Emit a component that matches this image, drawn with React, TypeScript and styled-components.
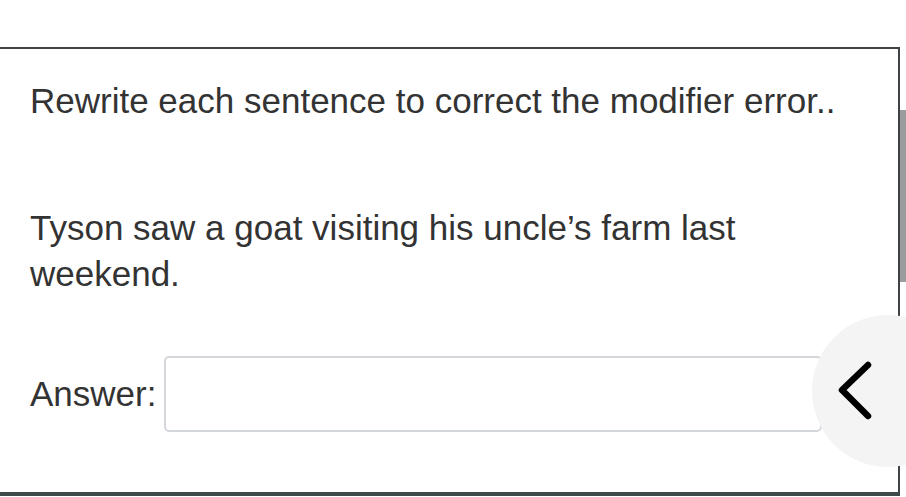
import React from 'react';
import styled, {createGlobalStyle} from "styled-components";

const GlobalStyle = createGlobalStyle`
  html, body {
    margin: 0;
    padding: 0;
    background: #fff;
    overflow: hidden;
  }
  body {
    font-family: "Liberation Sans", Arial, sans-serif;
    color: #333;
  }
`

const App: React.FC = () => {
    return (
        <>
            <GlobalStyle/>
            <StyledPage>
                <StyledPanel>
                    <StyledPrompt>Rewrite each sentence to correct the modifier error..</StyledPrompt>
                    <StyledSentence>Tyson saw a goat visiting his uncle’s farm last weekend.</StyledSentence>
                    <StyledAnswerRow>
                        <StyledLabel htmlFor="answer">Answer:</StyledLabel>
                        <StyledInput id="answer" type="text"/>
                    </StyledAnswerRow>
                </StyledPanel>
                <StyledScrollbar/>
                <StyledBackButton aria-label="Back">
                    <svg width="40" height="62" viewBox="0 0 40 62">
                        <path d="M32 5 L6 30 L32 56" fill="none" stroke="#000" strokeWidth="6.5"
                              strokeLinecap="round" strokeLinejoin="round"/>
                    </svg>
                </StyledBackButton>
            </StyledPage>
        </>
    );
};

export default App;

const StyledPage = styled.div`
  position: relative;
  width: 906px;
  height: 497px;
  padding-top: 47px;
  box-sizing: border-box;
  overflow: hidden;
`

const StyledPanel = styled.div`
  width: 900px;
  height: 449px;
  box-sizing: border-box;
  border-top: 2px solid #3d4347;
  border-right: 2px solid #3d4347;
  border-bottom: 4px solid #3d4a4a;
  padding: 32px 0 0 30px;
`

const StyledPrompt = styled.p`
  margin: 0;
  font-size: 35px;
  line-height: 40px;
`

const StyledSentence = styled.p`
  margin: 84px 0 0;
  width: 780px;
  font-size: 35px;
  line-height: 46px;
`

const StyledAnswerRow = styled.div`
  display: flex;
  align-items: center;
  gap: 8px;
  margin-top: 59px;
`

const StyledLabel = styled.label`
  font-size: 35px;
`

const StyledInput = styled.input`
  width: 658px;
  height: 76px;
  box-sizing: border-box;
  border: 2px solid #d3d7db;
  border-radius: 5px;
  outline: none;
  background: #fff;
`

const StyledScrollbar = styled.div`
  position: absolute;
  right: 0;
  top: 110px;
  width: 6px;
  height: 172px;
  background: #9c9c9c;
`

const StyledBackButton = styled.button`
  position: absolute;
  left: 812px;
  top: 315px;
  width: 152px;
  height: 152px;
  border-radius: 50%;
  border: none;
  background: #f4f4f5;
  padding: 0 0 0 24px;
  display: flex;
  align-items: center;
  justify-content: flex-start;
  cursor: pointer;
`
